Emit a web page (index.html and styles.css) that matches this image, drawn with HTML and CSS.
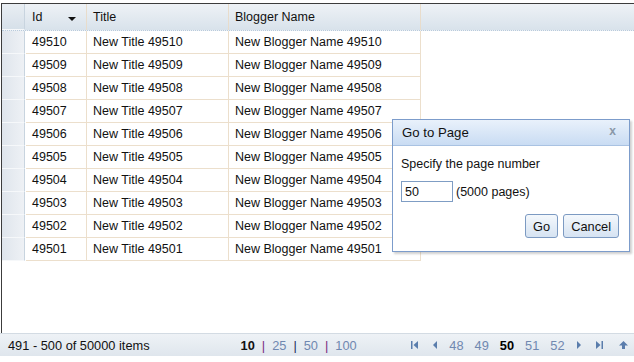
FILE: index.html
```html
<!DOCTYPE html>
<html lang="en">
<head>
  <meta charset="UTF-8">
  <title>Blogger grid</title>
  <link rel="stylesheet" href="styles.css">
</head>
<body>
  <div class="grid">
    <div class="head">
      <div class="sel"></div>
      <div class="hcell c-id">Id <span class="sort"></span></div>
      <div class="hcell c-title">Title</div>
      <div class="hcell c-name">Blogger Name</div>
      <div class="hrest"></div>
    </div>
    <div class="body" id="rows"></div>
  </div>

  <div class="footer">
    <span class="info">491 - 500 of 50000 items</span>
    <span class="sizes">
      <b>10</b><i>|</i><a>25</a><i class="dk">|</i><a>50</a><i>|</i><a>100</a>
    </span>
    <span class="pager">
      <svg class="ic" width="7" height="8" viewBox="0 0 7 8"><rect x="0" y="0" width="1.5" height="8"/><path d="M7 0 L2.5 4 L7 8 Z"/></svg>
      <svg class="ic prev" width="4" height="8" viewBox="0 0 4 8"><path d="M4 0 L0 4 L4 8 Z"/></svg>
      <a>48</a><a>49</a><b>50</b><a>51</a><a>52</a>
      <svg class="ic next" width="4" height="8" viewBox="0 0 4 8"><path d="M0 0 L4 4 L0 8 Z"/></svg>
      <svg class="ic last" width="7" height="8" viewBox="0 0 7 8"><path d="M0 0 L4.5 4 L0 8 Z"/><rect x="5.5" y="0" width="1.5" height="8"/></svg>
      <svg class="ic up" width="9" height="8" viewBox="0 0 9 8"><path d="M4.5 0 L9 4.5 L6 4.5 L6 8 L3 8 L3 4.5 L0 4.5 Z"/></svg>
    </span>
  </div>

  <div class="dialog">
    <div class="dtitle">Go to Page <span class="close">x</span></div>
    <div class="dbody">
      <p>Specify the page number</p>
      <div class="pageline"><input type="text" value="50"> (5000 pages)</div>
      <div class="btns"><button>Go</button><button>Cancel</button></div>
    </div>
  </div>

  <script>
    var rows = document.getElementById("rows");
    for (var id = 49510; id > 49500; id--) {
      var r = document.createElement("div");
      r.className = "row";
      r.innerHTML = '<div class="sel"></div>' +
        '<div class="cell c-id">' + id + '</div>' +
        '<div class="cell c-title">New Title ' + id + '</div>' +
        '<div class="cell c-name">New Blogger Name ' + id + '</div>';
      rows.appendChild(r);
    }
  </script>
</body>
</html>
```

FILE: styles.css
```css
body {
  margin: 0;
  font-family: "Liberation Sans", Arial, sans-serif;
  font-size: 12.5px;
  color: #111;
  background: #fff;
}
.grid {
  margin: 3px 0 0 1px;
  height: 329px;
  border-top: 1px solid #3c3c3c;
  border-left: 1px solid #3c3c3c;
}
.head {
  display: flex;
  height: 26px;
  background: linear-gradient(#eef2f6, #d8e2eb);
  border-bottom: 1px dotted #b9cbdc;
}
.head .sel {
  background: linear-gradient(#e9eef3, #d6e0e9);
  border-right: 1px solid #c8d4df;
}
.sel {
  width: 23px;
  flex: none;
  background: linear-gradient(90deg, #dfe5ec, #eef1f5);
  border-right: 1px solid #c8d4df;
  border-bottom: 1px solid #f6f8fa;
  box-sizing: border-box;
}
.hcell {
  box-sizing: border-box;
  padding-left: 7px;
  line-height: 26px;
  border-right: 1px solid #e8dccb;
  position: relative;
}
.hrest {
  flex: 1;
}
.sort {
  position: absolute;
  left: 43px;
  top: 13px;
  border-left: 4px solid transparent;
  border-right: 4px solid transparent;
  border-top: 4px solid #111;
}
.c-id { width: 62px; padding-left: 7px; }
.c-title { width: 142px; padding-left: 6px; }
.c-name { width: 192px; padding-left: 6px; }
.row {
  display: flex;
  height: 23px;
}
.cell {
  box-sizing: border-box;
  line-height: 22px;
  border-right: 1px solid #ecdfcc;
  border-bottom: 1px solid #ecdfcc;
  white-space: nowrap;
}
.row .c-id { margin-left: 1px; width: 61px; padding-left: 6px; }
.footer {
  display: flex;
  align-items: center;
  height: 22px;
  border-top: 1px solid #d3dbe3;
  background: linear-gradient(#eef2f6, #dfe6ed);
  font-size: 12.8px;
}
.info {
  margin-left: 8px;
}
.sizes {
  margin-left: 91px;
}
.sizes b {
  font-weight: bold;
}
.sizes a, .pager a {
  color: #7088b0;
}
.sizes i {
  font-style: normal;
  color: #7a2a80;
  margin: 0 7px;
}
.sizes i.dk {
  color: #1e2a5a;
}
.pager {
  margin-left: auto;
  margin-right: 6px;
  display: flex;
  align-items: center;
}
.pager a, .pager b {
  margin: 0 5.5px;
}
.pager b {
  font-weight: bold;
  color: #000;
}
.ic {
  fill: #5a7dac;
}
.prev { margin: 0 7px 0 15px; }
.next { margin: 0 15px 0 7px; }
.up { margin-left: 16px; }
.dialog {
  position: absolute;
  left: 392px;
  top: 119px;
  width: 236px;
  height: 131px;
  border: 1px solid #7c9ccb;
  background: #fff;
  box-shadow: 2px 2px 2px rgba(120, 120, 120, 0.35);
}
.dtitle {
  height: 25px;
  line-height: 25px;
  padding-left: 9px;
  font-size: 13.2px;
  color: #111;
  background: linear-gradient(#e9f1fb, #c9dcf3);
  border-bottom: 1px solid #a9c2e2;
  position: relative;
}
.close {
  position: absolute;
  right: 13px;
  top: -1px;
  color: #8a98a8;
  font-weight: bold;
  font-size: 12px;
}
.dbody {
  padding: 0 9px 0 8px;
}
.dbody p {
  margin: 11px 0 0;
  line-height: 15px;
}
.pageline {
  margin-top: 9px;
  display: flex;
  align-items: center;
  gap: 3px;
}
.pageline input {
  width: 44px;
  height: 17px;
  padding: 1px 3px;
  margin: 0;
  border: 1px solid #7f9dc4;
  font-family: inherit;
  font-size: 12.5px;
  color: #111;
}
.btns {
  display: flex;
  justify-content: flex-end;
  gap: 5px;
  margin-top: 12px;
  margin-right: 1px;
}
.btns button {
  height: 24px;
  padding: 0 7px;
  font-family: inherit;
  font-size: 12.8px;
  color: #111;
  border: 1px solid #7c9ac2;
  border-radius: 3px;
  background: linear-gradient(#f4f8fc, #d6e3f2);
}
```
